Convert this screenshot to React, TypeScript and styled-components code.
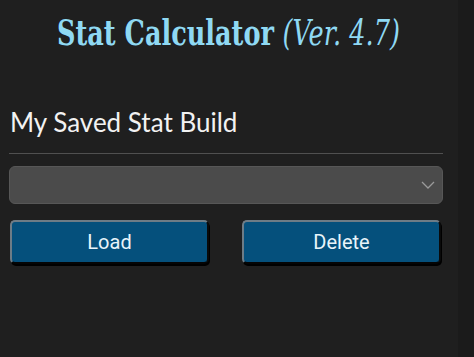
import styled, { createGlobalStyle } from "styled-components";

const GlobalStyle = createGlobalStyle`
  html, body {
    margin: 0;
    padding: 0;
    background: #1b1b1b;
  }
`;

const Page = styled.div`
  width: 458px;
  height: 357px;
  background: #1f1f1f;
  box-sizing: border-box;
  padding: 0 15px 0 9px;
  display: flex;
  flex-direction: column;
`;

const Header = styled.header`
  height: 95px;
  display: flex;
  justify-content: center;
  align-items: flex-start;
  padding-left: 4px;
`;

const Title = styled.h1`
  margin: 12px 0 0;
  display: inline-block;
  font-family: "DejaVu Serif", "Liberation Serif", serif;
  font-weight: bold;
  font-size: 36px;
  line-height: 40px;
  color: #8fd9f3;
  white-space: nowrap;
  transform: scaleX(0.71);
  transform-origin: center;
`;

const Version = styled.span`
  font-style: italic;
  font-weight: normal;
  margin-left: 12px;
`;

const Heading = styled.h2`
  margin: 11px 0 0 1px;
  font-family: Lato, "Noto Sans", sans-serif;
  font-weight: normal;
  font-size: 26px;
  line-height: 32px;
  color: #f2f2f2;
`;

const Divider = styled.hr`
  margin: 15px 0 0;
  border: 0;
  border-top: 1px solid #505050;
`;

const SelectBox = styled.div`
  margin-top: 12px;
  height: 38px;
  box-sizing: border-box;
  background: #4b4b4b;
  border: 1px solid #575757;
  border-radius: 6px;
  display: flex;
  align-items: center;
  justify-content: flex-end;
  padding-right: 6px;
`;

const ButtonRow = styled.div`
  margin-top: 16px;
  display: grid;
  grid-template-columns: 199px 199px;
  column-gap: 33px;
  padding-left: 1px;
`;

const Button = styled.button`
  height: 44px;
  box-sizing: border-box;
  background: #05507c;
  border: 2px solid;
  border-color: #6e7c86 #0a0a0a #050505 #6e7c86;
  border-radius: 5px;
  box-shadow: 1px 2px 0 #000;
  color: #e8f4fa;
  font-family: Roboto, "Liberation Sans", sans-serif;
  font-size: 20px;
  padding: 0;
  cursor: pointer;
`;

const Chevron = () => (
  <svg width="16" height="10" viewBox="0 0 16 10" fill="none">
    <path d="M2 2 L8 8 L14 2" stroke="#9a9a9a" strokeWidth="1.3" />
  </svg>
);

export default function App() {
  return (
    <>
      <GlobalStyle />
      <Page>
        <Header>
          <Title>
            Stat Calculator<Version>(Ver. 4.7)</Version>
          </Title>
        </Header>
        <Heading>My Saved Stat Build</Heading>
        <Divider />
        <SelectBox>
          <Chevron />
        </SelectBox>
        <ButtonRow>
          <Button>Load</Button>
          <Button>Delete</Button>
        </ButtonRow>
      </Page>
    </>
  );
}
